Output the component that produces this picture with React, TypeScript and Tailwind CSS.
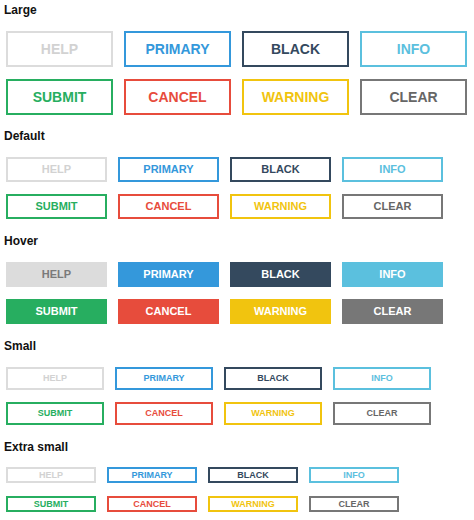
type Variant = "outline" | "solid";

interface Tone {
  label: string;
  outline: string;
  solid: string;
}

// flat palette, first row then second row of each block
const tones: Tone[] = [
  { label: "HELP", outline: "border-[#dcdcdc] text-[#d2d2d2]", solid: "bg-[#dcdcdc] text-[#7a7a7a]" },
  { label: "PRIMARY", outline: "border-[#3498db] text-[#3498db]", solid: "bg-[#3498db] text-white" },
  { label: "BLACK", outline: "border-[#34495e] text-[#34495e]", solid: "bg-[#34495e] text-white" },
  { label: "INFO", outline: "border-[#5bc0de] text-[#5bc0de]", solid: "bg-[#5bc0de] text-white" },
  { label: "SUBMIT", outline: "border-[#27ae60] text-[#27ae60]", solid: "bg-[#27ae60] text-white" },
  { label: "CANCEL", outline: "border-[#e74c3c] text-[#e74c3c]", solid: "bg-[#e74c3c] text-white" },
  { label: "WARNING", outline: "border-[#f1c40f] text-[#f1c40f]", solid: "bg-[#f1c40f] text-white" },
  { label: "CLEAR", outline: "border-[#777777] text-[#666666]", solid: "bg-[#777777] text-white" },
];

interface Size {
  title: string;
  variant: Variant;
  grid: string;
  button: string;
  top: string;
}

const sizes: Size[] = [
  {
    title: "Large",
    variant: "outline",
    grid: "mt-[11px] grid-cols-[repeat(4,107px)] gap-x-[11px] gap-y-[12px]",
    button: "h-[36px] text-[14px]",
    top: "mt-0",
  },
  {
    title: "Default",
    variant: "outline",
    grid: "mt-[11px] grid-cols-[repeat(4,101px)] gap-x-[11px] gap-y-[12px]",
    button: "h-[25px] text-[11px]",
    top: "mt-[11px]",
  },
  {
    title: "Hover",
    variant: "solid",
    grid: "mt-[11px] grid-cols-[repeat(4,101px)] gap-x-[11px] gap-y-[12px]",
    button: "h-[25px] text-[11px]",
    top: "mt-[12px]",
  },
  {
    title: "Small",
    variant: "outline",
    grid: "mt-[11px] grid-cols-[repeat(4,98px)] gap-x-[11px] gap-y-[12px]",
    button: "h-[23px] text-[9px]",
    top: "mt-[12px]",
  },
  {
    title: "Extra small",
    variant: "outline",
    grid: "mt-[10px] grid-cols-[repeat(4,90px)] gap-x-[11px] gap-y-[13px]",
    button: "h-[16px] text-[9px]",
    top: "mt-[12px]",
  },
];

const Button = ({ tone, variant, size }: { tone: Tone; variant: Variant; size: string }) => (
  <button
    className={`flex items-center justify-center font-bold leading-none ${size} ${
      variant === "outline" ? `border-2 bg-white ${tone.outline}` : tone.solid
    }`}
  >
    {tone.label}
  </button>
);

export default function App() {
  return (
    <div className="h-[520px] w-[474px] overflow-hidden bg-white font-['Liberation_Sans',Arial,sans-serif]">
      {sizes.map((size) => (
        <section key={size.title} className={size.top}>
          <h2 className="pl-[4px] text-[12px] font-bold leading-[20px] text-[#111]">{size.title}</h2>
          <div className={`grid pl-[6px] ${size.grid}`}>
            {tones.map((tone) => (
              <Button key={tone.label} tone={tone} variant={size.variant} size={size.button} />
            ))}
          </div>
        </section>
      ))}
    </div>
  );
}
